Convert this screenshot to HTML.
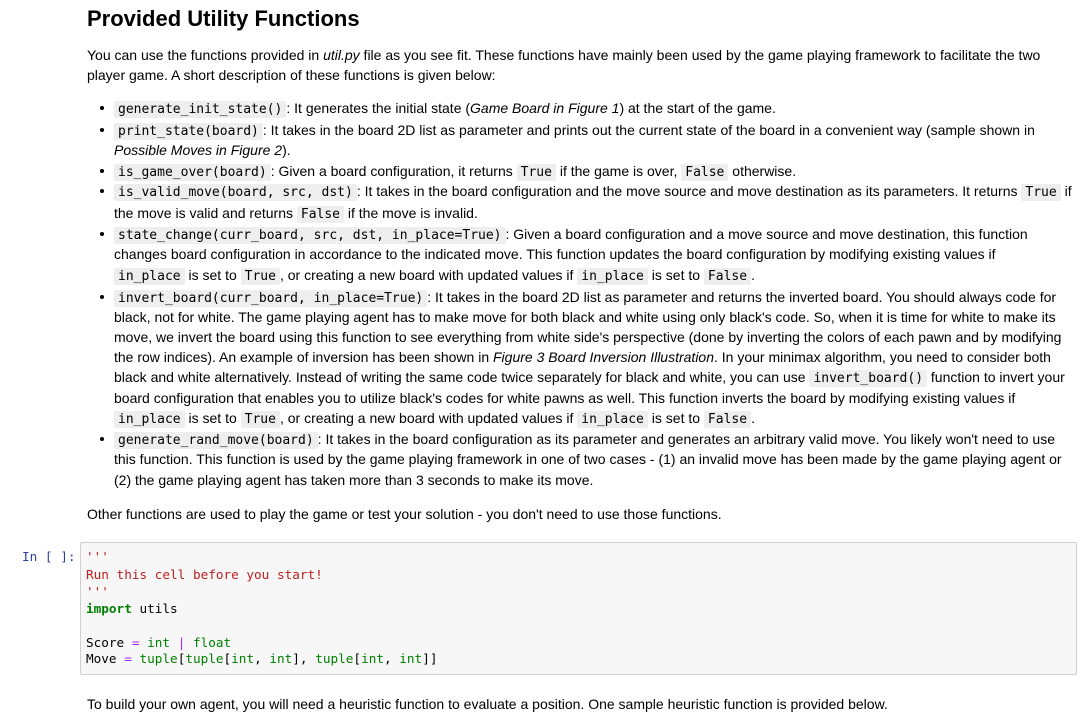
<!DOCTYPE html>
<html><head><meta charset="utf-8"><style>
body{margin:0;background:#fff;width:1087px;height:710px;overflow:hidden;font-family:"Liberation Sans",Arial,sans-serif;font-size:14px;color:#000;}
.abs{position:absolute;white-space:nowrap;}
h1{position:absolute;left:87px;top:6px;margin:0;font-size:22px;font-weight:bold;}
.l{position:absolute;left:87px;white-space:nowrap;line-height:20px;}
.b{left:114px}
.dot{position:absolute;left:100px;width:4px;height:4px;border-radius:50%;background:#000;}
code{font-family:"DejaVu Sans Mono","Liberation Mono",monospace;font-size:13px;background:#eee;padding:1px 4px;border-radius:2px;}
.cell{position:absolute;left:80px;top:542px;width:995px;height:131px;background:#f7f7f7;border:1px solid #cfcfcf;border-radius:2px;}
.code{position:absolute;left:86px;font-family:"DejaVu Sans Mono","Liberation Mono",monospace;font-size:12.7px;white-space:pre;line-height:17px;}
.s{color:#ba2121}.k{color:#008000;font-weight:bold}.o{color:#aa22ff}.bi{color:#008000}
</style></head><body>
<h1>Provided Utility Functions</h1>
<div class="l" style="top:45px">You can use the functions provided in <i>util.py</i> file as you see fit. These functions have mainly been used by the game playing framework to facilitate the two</div>
<div class="l" style="top:65px">player game. A short description of these functions is given below:</div>

<div class="dot" style="top:106px"></div>
<div class="l b" style="top:98px"><code>generate_init_state()</code>: It generates the initial state (<i>Game Board in Figure 1</i>) at the start of the game.</div>
<div class="dot" style="top:128px"></div>
<div class="l b" style="top:120px"><code>print_state(board)</code>: It takes in the board 2D list as parameter and prints out the current state of the board in a convenient way (sample shown in</div>
<div class="l b" style="top:140px"><i>Possible Moves in Figure 2</i>).</div>
<div class="dot" style="top:169px"></div>
<div class="l b" style="top:161px"><code>is_game_over(board)</code>: Given a board configuration, it returns <code>True</code> if the game is over, <code>False</code> otherwise.</div>
<div class="dot" style="top:189px"></div>
<div class="l b" style="top:181px"><code>is_valid_move(board, src, dst)</code>: It takes in the board configuration and the move source and move destination as its parameters. It returns <code>True</code> if</div>
<div class="l b" style="top:203px">the move is valid and returns <code>False</code> if the move is invalid.</div>
<div class="dot" style="top:232px"></div>
<div class="l b" style="top:224px"><code>state_change(curr_board, src, dst, in_place=True)</code>: Given a board configuration and a move source and move destination, this function</div>
<div class="l b" style="top:244px">changes board configuration in accordance to the indicated move. This function updates the board configuration by modifying existing values if</div>
<div class="l b" style="top:265px"><code>in_place</code> is set to <code>True</code>, or creating a new board with updated values if <code>in_place</code> is set to <code>False</code>.</div>
<div class="dot" style="top:295px"></div>
<div class="l b" style="top:287px"><code>invert_board(curr_board, in_place=True)</code>: It takes in the board 2D list as parameter and returns the inverted board. You should always code for</div>
<div class="l b" style="top:307px">black, not for white. The game playing agent has to make move for both black and white using only black's code. So, when it is time for white to make its</div>
<div class="l b" style="top:327px">move, we invert the board using this function to see everything from white side's perspective (done by inverting the colors of each pawn and by modifying</div>
<div class="l b" style="top:347px">the row indices). An example of inversion has been shown in <i>Figure 3 Board Inversion Illustration</i>. In your minimax algorithm, you need to consider both</div>
<div class="l b" style="top:367px">black and white alternatively. Instead of writing the same code twice separately for black and white, you can use <code>invert_board()</code> function to invert your</div>
<div class="l b" style="top:388px">board configuration that enables you to utilize black's codes for white pawns as well. This function inverts the board by modifying existing values if</div>
<div class="l b" style="top:408px"><code>in_place</code> is set to <code>True</code>, or creating a new board with updated values if <code>in_place</code> is set to <code>False</code>.</div>
<div class="dot" style="top:437px"></div>
<div class="l b" style="top:429px"><code>generate_rand_move(board)</code>: It takes in the board configuration as its parameter and generates an arbitrary valid move. You likely won't need to use</div>
<div class="l b" style="top:449px">this function. This function is used by the game playing framework in one of two cases - (1) an invalid move has been made by the game playing agent or</div>
<div class="l b" style="top:470px">(2) the game playing agent has taken more than 3 seconds to make its move.</div>

<div class="l" style="top:504px">Other functions are used to play the game or test your solution - you don't need to use those functions.</div>

<div class="abs code" style="left:22px;top:548px;color:#303f9f">In [ ]:</div>
<div class="cell"></div>
<div class="code" style="top:548px"><span class="s">'''</span></div>
<div class="code" style="top:566px"><span class="s">Run this cell before you start!</span></div>
<div class="code" style="top:583px"><span class="s">'''</span></div>
<div class="code" style="top:600px"><span class="k">import</span> utils</div>
<div class="code" style="top:634px">Score <span class="o">=</span> <span class="bi">int</span> <span class="o">|</span> <span class="bi">float</span></div>
<div class="code" style="top:650px">Move <span class="o">=</span> <span class="bi">tuple</span>[<span class="bi">tuple</span>[<span class="bi">int</span>, <span class="bi">int</span>], <span class="bi">tuple</span>[<span class="bi">int</span>, <span class="bi">int</span>]]</div>

<div class="l" style="top:694px">To build your own agent, you will need a heuristic function to evaluate a position. One sample heuristic function is provided below.</div>
</body></html>
